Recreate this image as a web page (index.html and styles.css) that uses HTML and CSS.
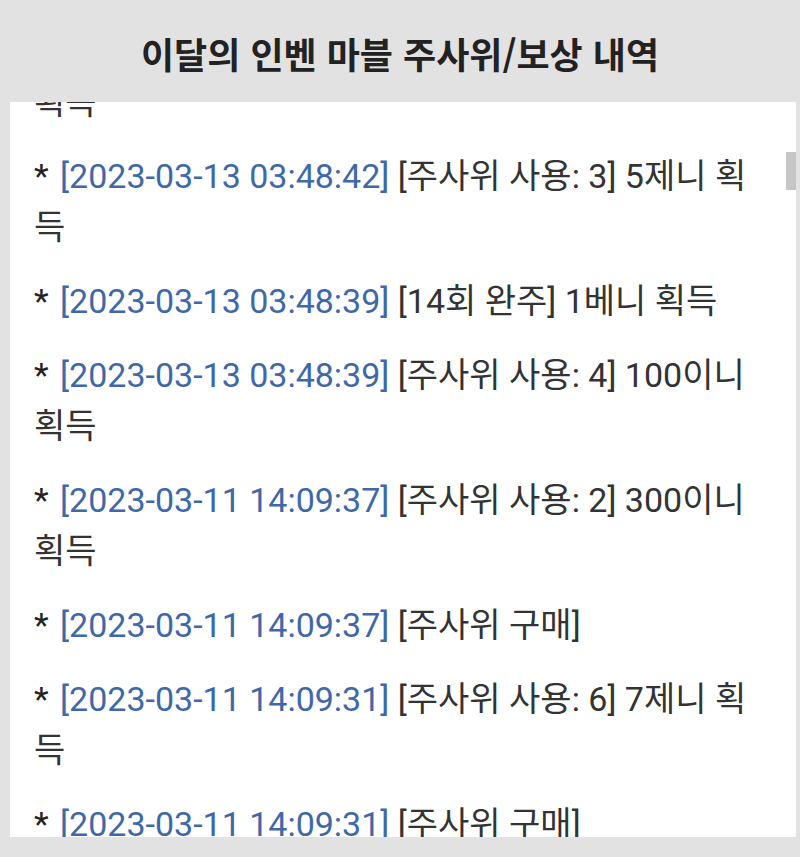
FILE: index.html
```html
<!DOCTYPE html>
<html lang="ko">
<head>
    <meta charset="UTF-8">
    <meta name="viewport" content="width=device-width, initial-scale=1.0">
    <title>이달의 인벤 마블 주사위/보상 내역</title>
    <link rel="stylesheet" href="styles.css">
</head>
<body>
    <div class="header">
        <h1>이달의 인벤 마블 주사위/보상 내역</h1>
    </div>
    <div class="panel">
        <div class="log">
            <p class="entry"><span class="star">*</span> <span class="time">[2023-03-13 03:48:46]</span> [주사위 사용: 1] 100이니 획득</p>
            <p class="entry"><span class="star">*</span> <span class="time">[2023-03-13 03:48:42]</span> [주사위 사용: 3] 5제니 획득</p>
            <p class="entry"><span class="star">*</span> <span class="time">[2023-03-13 03:48:39]</span> [14회 완주] 1베니 획득</p>
            <p class="entry"><span class="star">*</span> <span class="time">[2023-03-13 03:48:39]</span> [주사위 사용: 4] 100이니 획득</p>
            <p class="entry"><span class="star">*</span> <span class="time">[2023-03-11 14:09:37]</span> [주사위 사용: 2] 300이니 획득</p>
            <p class="entry"><span class="star">*</span> <span class="time">[2023-03-11 14:09:37]</span> [주사위 구매]</p>
            <p class="entry"><span class="star">*</span> <span class="time">[2023-03-11 14:09:31]</span> [주사위 사용: 6] 7제니 획득</p>
            <p class="entry"><span class="star">*</span> <span class="time">[2023-03-11 14:09:31]</span> [주사위 구매]</p>
            <p class="entry"><span class="star">*</span> <span class="time">[2023-03-11 14:09:25]</span> [주사위 사용: 5] 10이니 획득</p>
        </div>
        <div class="scroll-thumb"></div>
    </div>
</body>
</html>
```

FILE: styles.css
```css
* {
    box-sizing: border-box;
}

body {
    margin: 0;
    height: 100vh;
    background-color: #e2e2e2;
    font-family: Roboto, "Noto Sans CJK KR", sans-serif;
}

.header {
    height: 102px;
    display: flex;
    align-items: center;
    justify-content: center;
}
.header h1 {
    margin: 0;
    padding-top: 4px;
    font-family: "Noto Sans CJK KR", sans-serif;
    font-size: 36px;
    font-weight: bold;
    color: #222;
}

.panel {
    position: relative;
    height: 735px;
    margin: 0 4px 0 10px;
    padding: 0 36px 0 24px;
    background-color: #fff;
    overflow: hidden;
}

/* list is scrolled down a bit, so the top entry is cut off */
.log {
    margin-top: -76px;
}
.entry {
    margin: 0 0 23px;
    font-size: 34px;
    line-height: 51px;
    color: #333;
}
.star {
    margin-right: 3px;
    color: #222;
}
.time {
    color: #3f68a8;
}

.scroll-thumb {
    position: absolute;
    top: 50px;
    right: 0;
    width: 10px;
    height: 38px;
    background-color: #c6c6c6;
}
```
